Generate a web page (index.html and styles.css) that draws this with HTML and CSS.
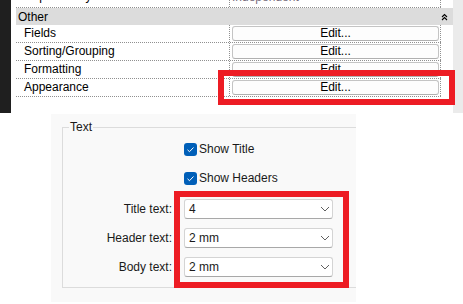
FILE: index.html
```html
<!DOCTYPE html>
<html lang="en">
<head>
    <meta charset="UTF-8">
    <title>Schedule Properties</title>
    <link rel="stylesheet" href="styles.css">
</head>
<body>
    <div class="page">
        <div class="grid-area">
            <div class="gutter"></div>
            <div class="props">
                <div class="row row-cut">
                    <div class="name">Dependency</div>
                    <div class="value muted">Independent</div>
                </div>
                <div class="category">
                    <span>Other</span>
                    <svg width="7" height="8" viewBox="0 0 7 8"><path d="M1 4 L3.5 1.5 L6 4 M1 7 L3.5 4.5 L6 7" fill="none" stroke="#000" stroke-width="1.1"/></svg>
                </div>
                <div class="row">
                    <div class="name">Fields</div>
                    <div class="value"><button class="edit">Edit...</button></div>
                </div>
                <div class="row">
                    <div class="name">Sorting/Grouping</div>
                    <div class="value"><button class="edit">Edit...</button></div>
                </div>
                <div class="row">
                    <div class="name">Formatting</div>
                    <div class="value"><button class="edit">Edit...</button></div>
                </div>
                <div class="row">
                    <div class="name">Appearance</div>
                    <div class="value"><button class="edit">Edit...</button></div>
                </div>
            </div>
            <div class="scroll"></div>
        </div>

        <div class="dialog-wrap">
            <div class="dialog">
                <fieldset class="group">
                    <legend>Text</legend>
                    <div class="form">
                        <span></span>
                        <label class="check">
                            <span class="box"><svg width="13" height="13" viewBox="0 0 13 13"><path d="M3.5 6.8 L5.5 8.7 L9.5 4.5" fill="none" stroke="#fff" stroke-width="1"/></svg></span>
                            Show Title
                        </label>
                        <span></span>
                        <label class="check">
                            <span class="box"><svg width="13" height="13" viewBox="0 0 13 13"><path d="M3.5 6.8 L5.5 8.7 L9.5 4.5" fill="none" stroke="#fff" stroke-width="1"/></svg></span>
                            Show Headers
                        </label>
                        <span class="lbl first">Title text:</span>
                        <div class="select first"><span>4</span><svg width="10" height="6" viewBox="0 0 10 6"><path d="M1 1 L5 5 L9 1" fill="none" stroke="#606060" stroke-width="1"/></svg></div>
                        <span class="lbl">Header text:</span>
                        <div class="select"><span>2 mm</span><svg width="10" height="6" viewBox="0 0 10 6"><path d="M1 1 L5 5 L9 1" fill="none" stroke="#606060" stroke-width="1"/></svg></div>
                        <span class="lbl">Body text:</span>
                        <div class="select"><span>2 mm</span><svg width="10" height="6" viewBox="0 0 10 6"><path d="M1 1 L5 5 L9 1" fill="none" stroke="#606060" stroke-width="1"/></svg></div>
                    </div>
                </fieldset>
            </div>
        </div>

        <div class="mark mark-edit"></div>
        <div class="mark mark-sizes"></div>
    </div>
</body>
</html>
```

FILE: styles.css
```css
body {
    margin: 0;
    font-family: "Liberation Sans", Arial, sans-serif;
    font-size: 12px;
    background-color: #fff;
    color: #000;
}
.page {
    position: relative;
    width: 463px;
    height: 304px;
    overflow: hidden;
}
.grid-area {
    display: flex;
    height: 113px;
}
.gutter {
    width: 11px;
    background-color: #1f1f1f;
}
.props {
    width: 437px;
    padding-left: 5px;
    overflow: hidden;
}
.scroll {
    flex: 1;
    background-color: #ebebeb;
}
.row {
    display: grid;
    grid-template-columns: 213px 212px;
    height: 17px;
    border-bottom: 1px dotted #909090;
    width: 425px;
}
.row-cut {
    margin-top: -10px;
}
.row-cut .name, .row-cut .value {
    line-height: 13px;
}
.name {
    padding-left: 8px;
    line-height: 17px;
    white-space: nowrap;
}
.value {
    border-left: 1px dotted #909090;
    border-right: 1px dotted #909090;
    padding: 1px 1px 0 2px;
}
.muted {
    color: #7a6f80;
}
.category {
    display: flex;
    justify-content: space-between;
    align-items: center;
    height: 17px;
    padding: 0 5px 0 2px;
    background-color: #dcdcdc;
}
.edit {
    display: block;
    width: 100%;
    height: 15px;
    padding: 0;
    font-family: inherit;
    font-size: 12px;
    line-height: 13px;
    color: #000;
    background-color: #fdfdfd;
    border: 1px solid #c4c4c4;
    border-bottom-color: #b0b0b0;
    border-radius: 3px;
}
.dialog-wrap {
    padding: 1px 0 0 51px;
}
.dialog {
    width: 305px;
    height: 188px;
    background-color: #f9f9f9;
    overflow: hidden;
    padding: 6px 0 0 11px;
    box-sizing: border-box;
}
.group {
    margin: 0;
    padding: 4px 0 10px 0;
    width: 330px;
    border: 1px solid #dcdcdc;
    box-sizing: border-box;
}
.group legend {
    padding: 0 1px;
    margin-left: 6px;
    line-height: 15px;
    color: #1a1a1a;
}
.form {
    display: grid;
    grid-template-columns: 109px 149px;
    column-gap: 12px;
    row-gap: 9px;
    align-items: center;
    color: #1a1a1a;
}
.check {
    display: flex;
    align-items: center;
    gap: 2px;
    height: 20px;
}
.box {
    width: 13px;
    height: 13px;
    border-radius: 3px;
    background-color: #005fb8;
    display: flex;
}
.lbl {
    text-align: right;
}
.first {
    margin-top: 2px;
}
.select {
    display: flex;
    justify-content: space-between;
    align-items: center;
    height: 20px;
    padding: 0 2px 0 4px;
    box-sizing: border-box;
    background-color: #fff;
    border: 1px solid #d4d4d4;
    border-bottom-color: #a8a8a8;
    border-radius: 3px;
}
.mark {
    position: absolute;
    border: 6px solid #ed1c24;
    box-sizing: border-box;
}
.mark-edit {
    left: 218px;
    top: 70px;
    width: 237px;
    height: 35px;
}
.mark-sizes {
    left: 174px;
    top: 191px;
    width: 175px;
    height: 97px;
}
```
